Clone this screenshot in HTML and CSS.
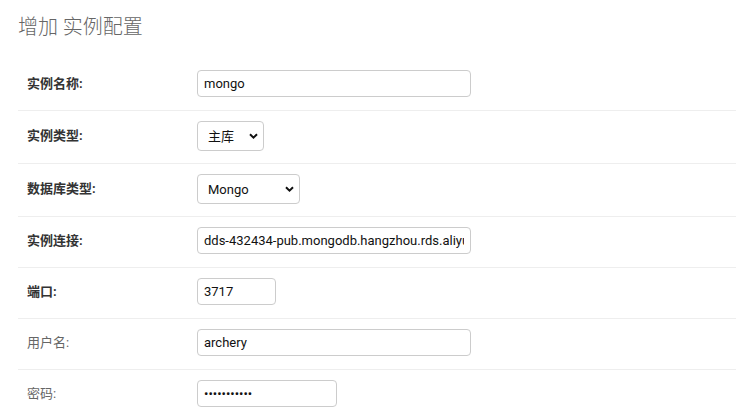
FILE: index.html
```html
<!DOCTYPE html>
<html lang="zh">
<head>
<meta charset="utf-8">
<link rel="stylesheet" href="styles.css">
</head>
<body>
<div class="page">
  <h1 class="title">增加 实例配置</h1>
  <form class="form">
    <div class="row row-input">
      <label class="label required">实例名称:</label>
      <input class="text wide" type="text" value="mongo">
    </div>
    <div class="row row-select">
      <label class="label required">实例类型:</label>
      <select class="select sel-type"><option>主库</option></select>
    </div>
    <div class="row row-select">
      <label class="label required">数据库类型:</label>
      <select class="select sel-db"><option>Mongo</option></select>
    </div>
    <div class="row row-input">
      <label class="label required">实例连接:</label>
      <input class="text wide" type="text" value="dds-432434-pub.mongodb.hangzhou.rds.aliyuncs.com">
    </div>
    <div class="row row-input">
      <label class="label required">端口:</label>
      <input class="text port" type="text" value="3717">
    </div>
    <div class="row row-input">
      <label class="label">用户名:</label>
      <input class="text wide" type="text" value="archery">
    </div>
    <div class="row row-input">
      <label class="label">密码:</label>
      <input class="text pass" type="password" value="12345678901">
    </div>
  </form>
</div>
</body>
</html>
```

FILE: styles.css
```css
html, body {
  margin: 0;
  padding: 0;
  background: #fff;
}
body {
  font-family: Roboto, "Noto Sans CJK SC", sans-serif;
  color: #333;
  font-size: 13px;
}
.page {
  padding: 0 0 0 18px;
}
.title {
  margin: 0;
  padding: 15px 0 0 0;
  height: 44px;
  box-sizing: border-box;
  font-size: 20px;
  line-height: 24px;
  font-weight: 300;
  color: #666;
}
.form {
  margin-top: 16px;
}
.row {
  display: grid;
  grid-template-columns: 170px auto;
  align-items: start;
  padding: 10px 0 10px 9px;
  border-bottom: 1px solid #eee;
}
.row:last-child {
  border-bottom: none;
}
.row-input {
  min-height: 30px;
}
.row-select {
  min-height: 32px;
}
.label {
  font-weight: bold;
  color: #333;
  font-size: 13px;
  line-height: 27px;
}
.row-select .label {
  line-height: 30px;
}
.label:not(.required) {
  font-weight: normal;
  color: #666;
}
.text {
  box-sizing: border-box;
  height: 27px;
  border: 1px solid #ccc;
  border-radius: 4px;
  padding: 0 6px;
  font-family: Roboto, "Noto Sans CJK SC", sans-serif;
  font-size: 13px;
  color: #111;
  background: #fff;
  outline: none;
}
.wide { width: 274px; }
.port { width: 79px; }
.pass { width: 140px; }
.select {
  box-sizing: border-box;
  height: 30px;
  border: 1px solid #ccc;
  border-radius: 4px;
  padding: 0 0 0 10px;
  font-family: Roboto, "Noto Sans CJK SC", sans-serif;
  font-size: 13px;
  color: #111;
  background: #fff url("data:image/svg+xml,%3Csvg xmlns='http://www.w3.org/2000/svg' width='9' height='6' viewBox='0 0 9 6'%3E%3Cpath d='M1 1.2 L4.5 4.6 L8 1.2' fill='none' stroke='%23111' stroke-width='2'/%3E%3C/svg%3E") no-repeat right 5px center;
  -webkit-appearance: none;
  appearance: none;
}
.sel-type { width: 67px; }
.sel-db { width: 103px; }
```
